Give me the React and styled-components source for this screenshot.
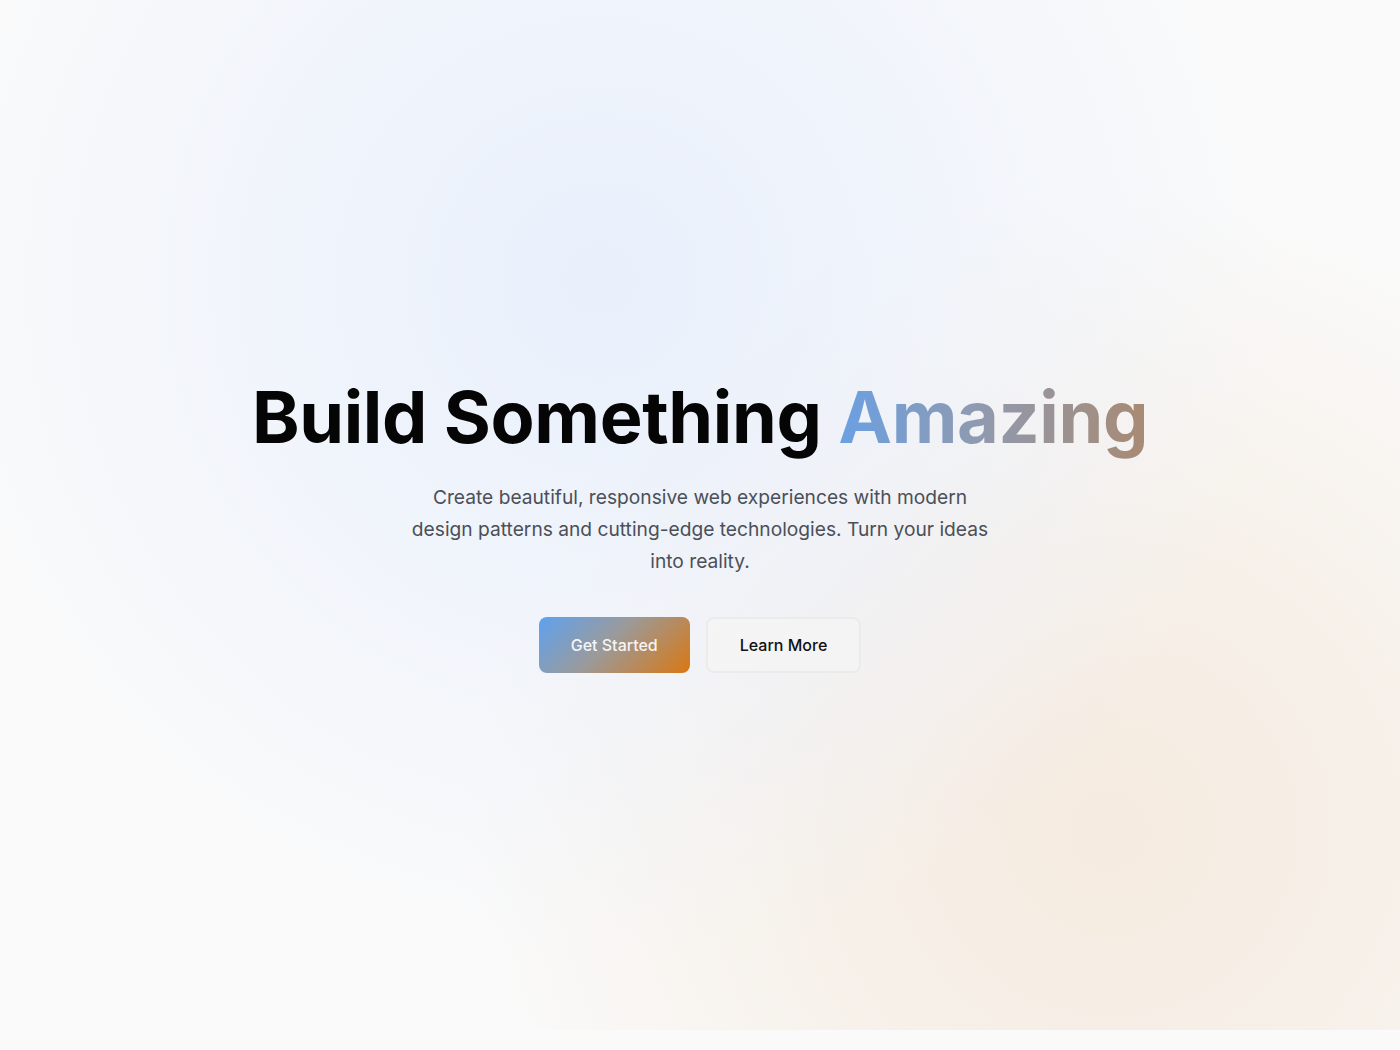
import React from "react";
import styled, { createGlobalStyle } from "styled-components";

const GlobalStyle = createGlobalStyle`
  html, body {
    margin: 0;
    padding: 0;
    background: #fafafa;
    font-family: Inter, "Noto Sans", "Liberation Sans", sans-serif;
  }
  * { box-sizing: border-box; }
`;

const Hero = styled.section`
  height: 1030px;
  display: flex;
  align-items: center;
  justify-content: center;
  background:
    radial-gradient(circle at 600px 280px, rgba(228, 237, 252, 0.8) 0, rgba(235, 241, 252, 0.6) 340px, rgba(250, 250, 250, 0) 680px),
    radial-gradient(circle at 1110px 830px, rgba(243, 229, 214, 0.75) 0, rgba(245, 234, 222, 0.55) 320px, rgba(250, 250, 250, 0) 640px),
    #fafafa;
`;

const Content = styled.div`
  display: flex;
  flex-direction: column;
  align-items: center;
  text-align: center;
  margin-top: 20px;
`;

const Title = styled.h1`
  margin: 0;
  font-size: 72px;
  font-weight: 700;
  line-height: 1.1;
  letter-spacing: -0.005em;
  color: #050505;
`;

const Accent = styled.span`
  background: linear-gradient(90deg, #6aa0e2 0%, #8f9ab0 45%, #a88a72 100%);
  -webkit-background-clip: text;
  background-clip: text;
  color: transparent;
`;

const Lead = styled.p`
  margin: 24px 0 0;
  max-width: 582px;
  font-size: 19.2px;
  line-height: 32px;
  color: #4b4f57;
`;

const Actions = styled.div`
  display: flex;
  gap: 16px;
  margin-top: 40px;
`;

const Button = styled.button`
  height: 56px;
  padding: 0 32px;
  border-radius: 8px;
  font-family: inherit;
  font-size: 16px;
  font-weight: 500;
  cursor: pointer;
  border: ${(p) => (p.$primary ? "none" : "2px solid #ebebeb")};
  color: ${(p) => (p.$primary ? "rgba(255,255,255,0.92)" : "#111")};
  background: ${(p) =>
    p.$primary
      ? "linear-gradient(135deg, #5ea2f0 0%, #9a9a9c 45%, #d97812 100%)"
      : "rgba(245, 245, 245, 0.7)"};
`;

export default function App() {
  return (
    <>
      <GlobalStyle />
      <Hero>
        <Content>
          <Title>
            Build Something <Accent>Amazing</Accent>
          </Title>
          <Lead>
            Create beautiful, responsive web experiences with modern design
            patterns and cutting-edge technologies. Turn your ideas into
            reality.
          </Lead>
          <Actions>
            <Button $primary>Get Started</Button>
            <Button>Learn More</Button>
          </Actions>
        </Content>
      </Hero>
    </>
  );
}
